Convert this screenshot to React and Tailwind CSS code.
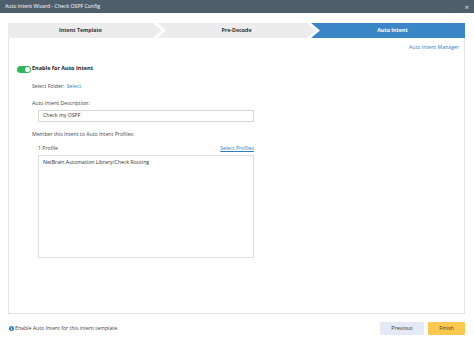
export default function App() {
  return (
    <div className="w-[474px] h-[345px] bg-white flex flex-col overflow-hidden font-['Open_Sans',sans-serif] text-[#333]">
      {/* Title bar */}
      <div className="h-[13px] bg-[#4f5e6b] flex items-center justify-between pl-[5px] pr-[5px] text-white">
        <span className="text-[5.2px] leading-none">Auto Intent Wizard - Check OSPF Config</span>
        <span className="text-[8px] leading-none text-[#dfe4e8]">×</span>
      </div>

      <div className="pl-[8px] pr-[9px] pt-[10px]">
        {/* Steps */}
        <div className="flex h-[15px]">
          <div className="w-[154px] shrink-0 bg-[#ececec] flex items-center justify-center pr-[9px] text-[5.3px] font-bold text-[#333] [clip-path:polygon(0_0,calc(100%-9px)_0,100%_50%,calc(100%-9px)_100%,0_100%)]">
            Intent Template
          </div>
          <div className="w-[159px] shrink-0 -ml-[5px] bg-[#ececec] flex items-center justify-center text-[5.3px] font-bold text-[#333] [clip-path:polygon(0_0,calc(100%-9px)_0,100%_50%,calc(100%-9px)_100%,0_100%,9px_50%)]">
            Pre-Decode
          </div>
          <div className="flex-1 -ml-[5px] bg-[#3b86c6] flex items-center justify-center pl-[9px] text-[5.3px] font-bold text-white [clip-path:polygon(0_0,100%_0,100%_100%,0_100%,9px_50%)]">
            Auto Intent
          </div>
        </div>

        {/* Panel */}
        <div className="h-[276px] border border-t-0 border-[#e3e3e3] bg-white flex flex-col">
          <div className="mt-[6px] pr-[5px] h-[7px] leading-[7px] text-right text-[5.2px] text-[#2f7cbf]">
            Auto Intent Manager
          </div>

          <div className="mt-[14px] pl-[8px] flex items-center gap-[1px] h-[8px]">
            <div className="w-[14px] h-[7px] rounded-full bg-[#2fb55a] flex items-center justify-end pr-[1px]">
              <div className="w-[5px] h-[5px] rounded-full bg-white" />
            </div>
            <span className="text-[5.5px] font-bold text-[#222] leading-none">Enable for Auto Intent</span>
          </div>

          <div className="pl-[23px] flex flex-col">
            <div className="mt-[10px] h-[7px] leading-[7px] text-[5.2px] text-[#444]">
              Select Folder: <span className="ml-[1px] text-[#2f7cbf]">Select</span>
            </div>
            <div className="mt-[10px] h-[7px] leading-[7px] text-[5.2px] text-[#444]">
              Auto Intent Description:
            </div>
            <div className="mt-[3px] ml-[6px] w-[216px] h-[12px] border border-[#d8d8d8] flex items-center pl-[4px] text-[5.2px] text-[#333]">
              Check my OSPF
            </div>
            <div className="mt-[9px] h-[7px] leading-[7px] text-[5.2px] text-[#444]">
              Member this Intent to Auto Intent Profiles:
            </div>
            <div className="mt-[7px] ml-[6px] w-[216px] h-[7px] leading-[7px] flex justify-between text-[5.2px]">
              <span className="text-[#444]">1 Profile</span>
              <span className="text-[#2f7cbf] underline">Select Profiles</span>
            </div>
            <div className="mt-[3px] ml-[6px] w-[216px] h-[103px] border border-[#dedede] pl-[4px] pt-[3px] text-[5.2px] leading-[7px] text-[#333]">
              NetBrain Automation Library/Check Routing
            </div>
          </div>
        </div>
      </div>

      {/* Footer */}
      <div className="flex items-center justify-between pl-[9px] pr-[9px] mt-[8px]">
        <div className="flex items-center gap-[1px]">
          <svg width="5" height="5" viewBox="0 0 10 10">
            <circle cx="5" cy="5" r="5" fill="#2f7cbf" />
            <rect x="4.2" y="4.2" width="1.6" height="3.8" fill="#fff" />
            <circle cx="5" cy="2.6" r="0.9" fill="#fff" />
          </svg>
          <span className="text-[5.2px] text-[#444] leading-none">Enable Auto Intent for this intent template.</span>
        </div>
        <div className="flex gap-[4px]">
          <div className="w-[44px] h-[13px] bg-[#e4eaf5] rounded-[1px] flex items-center justify-center text-[5.3px] text-[#333]">
            Previous
          </div>
          <div className="w-[37px] h-[13px] bg-[#fcc94e] rounded-[1px] flex items-center justify-center text-[5.3px] text-[#333]">
            Finish
          </div>
        </div>
      </div>
    </div>
  );
}
